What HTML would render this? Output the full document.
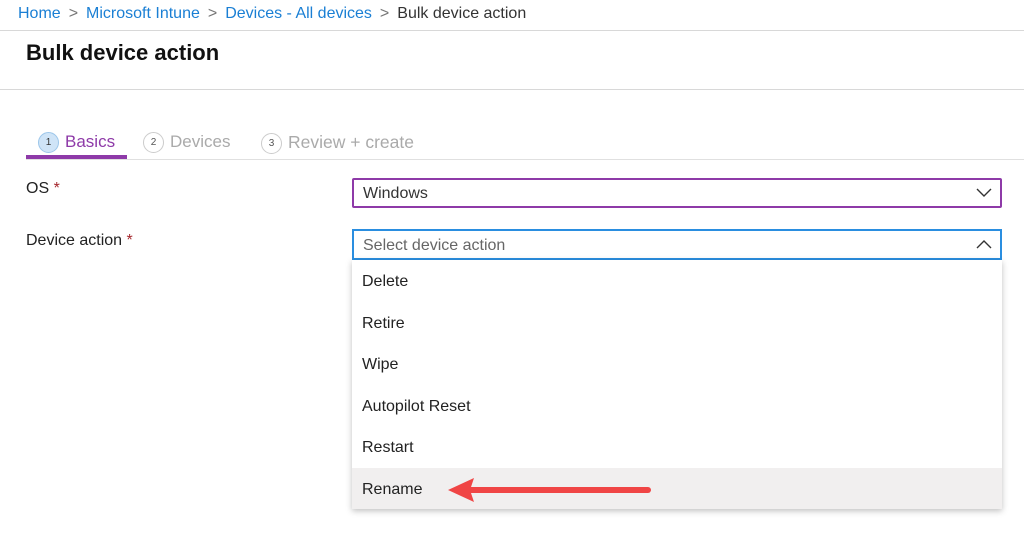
<!DOCTYPE html>
<html><head><meta charset="utf-8"><style>
*{margin:0;padding:0;box-sizing:border-box}
body{width:1024px;height:547px;background:#fff;font-family:"Liberation Sans",sans-serif;position:relative;overflow:hidden;color:#222}
.a{position:absolute;white-space:nowrap}
.bc{top:5px;left:18px;font-size:16px;color:#1a7fd4}
.bc .s{color:#777;margin:0 8px}
.bc .c{color:#333}
.hr{position:absolute;left:0;right:0;height:1px;background:#d8d8d8}
.circ{display:inline-block;width:21px;height:21px;border-radius:50%;border:1px solid #ccc;font-size:10px;text-align:center;line-height:19px;color:#555;vertical-align:middle;margin-right:6px}
.tab{top:132px;font-size:17px;color:#aaa}
.box{position:absolute;left:352px;width:650px;background:#fff}
.item{position:absolute;left:0;width:650px;height:41.5px;padding-left:10px;font-size:16px;line-height:43px;color:#222}
.req{color:#a4262c}
</style></head><body>
<div class="a bc">Home<span class="s">&gt;</span>Microsoft Intune<span class="s">&gt;</span>Devices - All devices<span class="s">&gt;</span><span class="c">Bulk device action</span></div>
<div class="hr" style="top:30px"></div>
<div class="a" style="top:40px;left:26px;font-size:22px;font-weight:bold;color:#111">Bulk device action</div>
<div class="hr" style="top:89px"></div>
<div class="a tab" style="left:38px;color:#8e3aa8"><span class="circ" style="background:#cfe4f7;border-color:#9cc6ea;color:#333">1</span>Basics</div>
<div class="a tab" style="left:143px"><span class="circ">2</span>Devices</div>
<div class="a tab" style="left:261px;font-size:17.5px"><span class="circ">3</span>Review + create</div>
<div class="hr" style="top:159px;left:26px;background:#e0e0e0"></div>
<div class="a" style="top:155px;left:26px;width:101px;height:4px;background:#8e3aa8"></div>
<div class="a" style="top:180px;left:26px;font-size:16px">OS <span class="req">*</span></div>
<div class="a" style="top:232px;left:26px;font-size:16px">Device action <span class="req">*</span></div>
<div class="box" style="top:178px;height:30px;border:2px solid #8e3aa8;border-radius:2px">
<span class="a" style="left:9px;top:5px;font-size:16px;color:#333">Windows</span>
<svg class="a" style="right:8px;top:7px" width="16" height="12"><path d="M1 2 L8 9 L15 2" fill="none" stroke="#333" stroke-width="1.4"/></svg></div>
<div class="box" style="top:229px;height:31px;border:2px solid #2a8ee0">
<span class="a" style="left:9px;top:6px;font-size:16px;color:#666">Select device action</span>
<svg class="a" style="right:8px;top:7px" width="16" height="12"><path d="M1 10 L8 3 L15 10" fill="none" stroke="#333" stroke-width="1.4"/></svg></div>
<div class="box" style="top:260px;height:249px;box-shadow:0 2px 6px rgba(0,0,0,.25)">
<div class="item" style="top:0">Delete</div>
<div class="item" style="top:41.5px">Retire</div>
<div class="item" style="top:83px">Wipe</div>
<div class="item" style="top:124.5px">Autopilot Reset</div>
<div class="item" style="top:166px">Restart</div>
<div class="item" style="top:207.5px;background:#f1efef">Rename</div>
</div>
<svg class="a" style="left:440px;top:474px" width="220" height="34">
<path d="M30 16 L208 16" stroke="#f04545" stroke-width="6" stroke-linecap="round"/>
<path d="M8 16 L34 4 L30 16 L34 28 Z" fill="#f04545"/></svg>
</body></html>
